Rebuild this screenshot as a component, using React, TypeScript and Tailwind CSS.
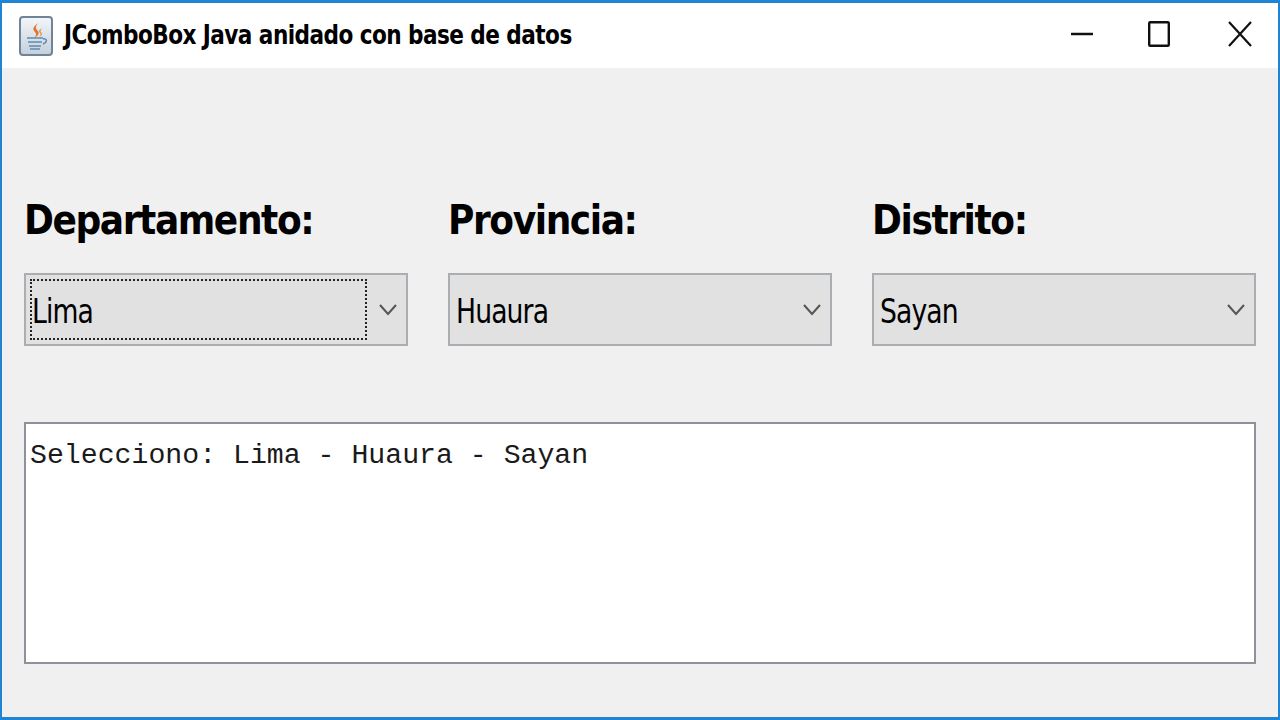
import React from 'react';

const sans = { fontFamily: '"DejaVu Sans", sans-serif' };

const JavaIcon = () => (
  <svg width="34" height="40" viewBox="0 0 34 40" className="shrink-0">
    <defs>
      <linearGradient id="tile" x1="0" y1="0" x2="0" y2="1">
        <stop offset="0" stopColor="#f4f6f8" />
        <stop offset="1" stopColor="#c3d0dc" />
      </linearGradient>
    </defs>
    <rect x="1" y="1" width="32" height="38" rx="3" fill="url(#tile)" stroke="#6f8496" strokeWidth="2" />
    <path d="M19 7c-5 4-6 6-3 9 2 2 1 4-1 6 5-3 6-5 3-8-2-2-1-4 1-7z" fill="#e0762c" />
    <path d="M23 12c-3 2-4 3-2 5 1 2 0 3-1 4 3-1 4-3 2-5-1-1 0-2 1-4z" fill="#e99a5c" />
    <path d="M8 22h16M9 26h14M10 30h12M11 33h10" stroke="#5f8cb0" strokeWidth="1.6" />
    <path d="M24 23c4-1 5 3 0 5" fill="none" stroke="#5f8cb0" strokeWidth="1.5" />
  </svg>
);

const Combo = ({ value, focused }: { value: string; focused?: boolean }) => (
  <div className="relative flex h-[73px] items-center border-2 border-[#aaaeb3] bg-[#e1e1e1]">
    {focused && (
      <div className="absolute left-1 top-1 h-[61px] w-[337px] border-2 border-dotted border-[#222222]" />
    )}
    <div className="flex-1 pl-[6px] pt-[3px]">
      <span className="inline-block origin-left scale-x-[0.87] text-[34px] tracking-[-1px] text-black font-stretch-condensed" style={sans}>
        {value}
      </span>
    </div>
    <svg width="20" height="14" viewBox="0 0 20 14" className="mr-[8px]">
      <path d="M2 2l8 9 8-9" fill="none" stroke="#555555" strokeWidth="2" />
    </svg>
  </div>
);

const Label = ({ children }: { children: string }) => (
  <div className="h-[56px] text-[40px] leading-[56px] font-bold tracking-[-1.4px] text-black font-stretch-condensed" style={sans}>
    {children}
  </div>
);

export default function App() {
  return (
    <div className="flex h-[720px] w-[1280px] flex-col border-x-2 border-y-[3px] border-[#1f84d4] bg-[#f0f0f0]">
      <div className="flex h-[65px] items-center bg-white">
        <div className="ml-[17px] flex items-center gap-[11px]">
          <JavaIcon />
          <span className="inline-block origin-left scale-x-[0.924] text-[26px] font-bold tracking-[-0.6px] text-black font-stretch-condensed" style={sans}>
            JComboBox Java anidado con base de datos
          </span>
        </div>
        <div className="mb-[4px] ml-auto flex items-center pr-[26px]">
          <svg width="24" height="4" viewBox="0 0 24 4">
            <path d="M0 2h22" stroke="#111111" strokeWidth="2.5" />
          </svg>
          <svg width="22" height="26" viewBox="0 0 22 26" className="ml-[53px]">
            <rect x="1.2" y="1.2" width="19.6" height="23.6" rx="1" fill="none" stroke="#111111" strokeWidth="2.4" />
          </svg>
          <svg width="24" height="26" viewBox="0 0 24 26" className="ml-[58px]">
            <path d="M1 1l22 24M23 1L1 25" stroke="#111111" strokeWidth="2.2" />
          </svg>
        </div>
      </div>

      <div className="px-[22px] pt-[124px]">
        <div className="grid grid-cols-3 gap-x-[40px] gap-y-[25px]">
          <Label>Departamento:</Label>
          <Label>Provincia:</Label>
          <Label>Distrito:</Label>
          <Combo value="Lima" focused />
          <Combo value="Huaura" />
          <Combo value="Sayan" />
        </div>
        <div className="mt-[76px] h-[242px] border-2 border-[#8d9299] bg-white pl-[4px] pt-[14px] font-['Liberation_Mono',monospace] text-[28.2px] leading-[36px] text-[#1a1a1a]">
          Selecciono: Lima - Huaura - Sayan
        </div>
      </div>
    </div>
  );
}
